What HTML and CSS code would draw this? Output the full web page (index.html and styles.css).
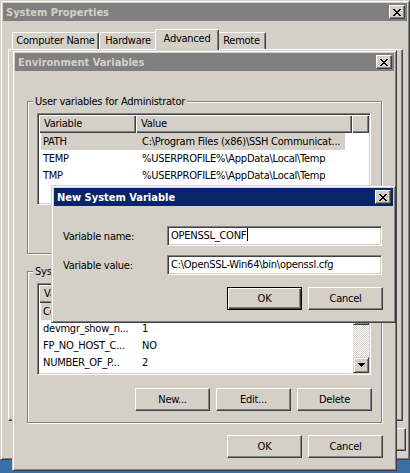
FILE: index.html
```html
<!DOCTYPE html>
<html lang="en">
<head>
    <meta charset="UTF-8">
    <meta name="viewport" content="width=device-width, initial-scale=1.0">
    <title>System Properties</title>
    <link rel="stylesheet" href="styles.css">
</head>
<body>
<div class="desktop">

    <!-- System Properties (back window) -->
    <div class="window sysprops">
        <div class="titlebar">
            <span class="title">System Properties</span>
            <span class="close"><svg width="8" height="7" viewBox="0 0 8 7"><path d="M0 0h2v1h-2zM6 0h2v1h-2zM1 1h2v1h-2zM5 1h2v1h-2zM2 2h4v1h-4zM3 3h2v1h-2zM2 4h4v1h-4zM1 5h2v1h-2zM5 5h2v1h-2zM0 6h2v1h-2zM6 6h2v1h-2z"/></svg></span>
        </div>
        <div class="tabs">
            <div class="tab tab-computer">Computer Name</div>
            <div class="tab tab-hardware">Hardware</div>
            <div class="tab tab-advanced active">Advanced</div>
            <div class="tab tab-remote">Remote</div>
        </div>
        <div class="tabpanel"></div>
        <div class="button-row sp-buttons">
            <button class="btn">OK</button>
            <button class="btn">Cancel</button>
            <button class="btn">Apply</button>
        </div>
    </div>

    <!-- Environment Variables -->
    <div class="window envvars">
        <div class="titlebar">
            <span class="title">Environment Variables</span>
            <span class="close"><svg width="8" height="7" viewBox="0 0 8 7"><path d="M0 0h2v1h-2zM6 0h2v1h-2zM1 1h2v1h-2zM5 1h2v1h-2zM2 2h4v1h-4zM3 3h2v1h-2zM2 4h4v1h-4zM1 5h2v1h-2zM5 5h2v1h-2zM0 6h2v1h-2zM6 6h2v1h-2z"/></svg></span>
        </div>
        <div class="env-body">
            <div class="group user-group">
                <div class="group-label">User variables for Administrator</div>
                <div class="listview">
                    <div class="lv-main">
                        <div class="lv-header">
                            <div class="hcell col-name">Variable</div>
                            <div class="hcell col-value">Value</div>
                            <div class="hcell col-fill"></div>
                        </div>
                        <div class="row selected"><span class="c1">PATH</span><span class="c2">C:\Program Files (x86)\SSH Communicat...</span></div>
                        <div class="row"><span class="c1">TEMP</span><span class="c2">%USERPROFILE%\AppData\Local\Temp</span></div>
                        <div class="row"><span class="c1">TMP</span><span class="c2">%USERPROFILE%\AppData\Local\Temp</span></div>
                    </div>
                </div>
                <div class="button-row group-buttons">
                    <button class="btn">New...</button>
                    <button class="btn">Edit...</button>
                    <button class="btn">Delete</button>
                </div>
            </div>

            <div class="group sys-group">
                <div class="group-label">System variables</div>
                <div class="listview">
                    <div class="lv-main">
                        <div class="lv-header">
                            <div class="hcell col-name">Variable</div>
                            <div class="hcell col-value">Value</div>
                            <div class="hcell col-fill"></div>
                        </div>
                        <div class="row selected"><span class="c1">ComSpec</span><span class="c2">C:\Windows\system32\cmd.exe</span></div>
                        <div class="row"><span class="c1">devmgr_show_n...</span><span class="c2">1</span></div>
                        <div class="row"><span class="c1">FP_NO_HOST_C...</span><span class="c2">NO</span></div>
                        <div class="row"><span class="c1">NUMBER_OF_P...</span><span class="c2">2</span></div>
                        <div class="row"><span class="c1">OS</span><span class="c2">Windows_NT</span></div>
                    </div>
                    <div class="vscroll">
                        <span class="sb-btn"><svg width="7" height="4" viewBox="0 0 7 4"><path d="M3 0h1v1h1v1h1v1h1v1h-7v-1h1v-1h1v-1h1z"/></svg></span>
                        <span class="sb-thumb"></span>
                        <span class="sb-track"></span>
                        <span class="sb-btn"><svg width="7" height="4" viewBox="0 0 7 4"><path d="M0 0h7v1h-1v1h-1v1h-1v1h-1v-1h-1v-1h-1v-1h-1z"/></svg></span>
                    </div>
                </div>
                <div class="button-row group-buttons">
                    <button class="btn">New...</button>
                    <button class="btn">Edit...</button>
                    <button class="btn">Delete</button>
                </div>
            </div>

            <div class="button-row env-buttons">
                <button class="btn">OK</button>
                <button class="btn">Cancel</button>
            </div>
        </div>
    </div>

    <!-- New System Variable (front dialog) -->
    <div class="window newvar">
        <div class="titlebar active">
            <span class="title">New System Variable</span>
            <span class="close"><svg width="8" height="7" viewBox="0 0 8 7"><path d="M0 0h2v1h-2zM6 0h2v1h-2zM1 1h2v1h-2zM5 1h2v1h-2zM2 2h4v1h-4zM3 3h2v1h-2zM2 4h4v1h-4zM1 5h2v1h-2zM5 5h2v1h-2zM0 6h2v1h-2zM6 6h2v1h-2z"/></svg></span>
        </div>
        <div class="newvar-body">
            <div class="form">
                <label class="field-label">Variable name:</label>
                <div class="field">OPENSSL_CONF<span class="caret"></span></div>
                <label class="field-label">Variable value:</label>
                <div class="field">C:\OpenSSL-Win64\bin\openssl.cfg</div>
            </div>
            <div class="button-row dialog-buttons">
                <button class="btn default">OK</button>
                <button class="btn">Cancel</button>
            </div>
        </div>
    </div>

</div>
</body>
</html>
```

FILE: styles.css
```css
/* Windows classic dialogs */
* {
    box-sizing: border-box;
}

body {
    margin: 0;
    width: 410px;
    height: 473px;
    overflow: hidden;
    background-color: #3a6ea5;
    font-family: "DejaVu Sans Condensed", "DejaVu Sans", sans-serif;
    font-size: 11px;
    letter-spacing: -0.25px;
    color: #000;
}

.desktop {
    position: relative;
    width: 410px;
    height: 473px;
}

/* window frame */
.window {
    position: absolute;
    display: flex;
    flex-direction: column;
    padding: 2px;
    background-color: #d4d0c8;
    border: 1px solid;
    border-color: #d4d0c8 #404040 #404040 #d4d0c8;
    box-shadow: inset 1px 1px #fff, inset -1px -1px #808080;
}

.sysprops {
    left: 0;
    top: 0;
    width: 410px;
    height: 460px;
}

.envvars {
    left: 12px;
    top: 50px;
    width: 385px;
    height: 421px;
}

.newvar {
    left: 51px;
    top: 185px;
    width: 345px;
    height: 138px;
}

.titlebar {
    display: flex;
    align-items: center;
    flex: none;
    height: 18px;
    padding: 0 2px 0 3px;
    background-color: #808080;
    color: #d4d0c8;
    font-weight: bold;
    letter-spacing: 0;
}

.titlebar.active {
    background-color: #0a246a;
    color: #fff;
}

.titlebar .title {
    flex: 1;
    white-space: nowrap;
}

.close {
    display: flex;
    align-items: center;
    justify-content: center;
    width: 16px;
    height: 14px;
    background-color: #d4d0c8;
    border: 1px solid;
    border-color: #fff #404040 #404040 #fff;
    box-shadow: inset -1px -1px #808080;
}

/* buttons */
.button-row {
    display: flex;
    justify-content: flex-end;
    gap: 6px;
    flex: none;
}

.btn {
    width: 75px;
    height: 23px;
    padding: 0;
    background-color: #d4d0c8;
    border: 1px solid;
    border-color: #fff #404040 #404040 #fff;
    box-shadow: inset -1px -1px #808080;
    font: inherit;
    letter-spacing: inherit;
    color: #000;
}

.btn.default {
    border-color: #000;
    box-shadow: inset 1px 1px #fff, inset -1px -1px #404040, inset -2px -2px #808080;
}

/* tabs */
.tabs {
    display: flex;
    align-items: flex-end;
    height: 20px;
    margin-top: 8px;
    padding-left: 9px;
}

.tab {
    height: 17px;
    line-height: 15px;
    text-align: center;
    white-space: nowrap;
    background-color: #d4d0c8;
    border: 1px solid;
    border-color: #fff #404040 transparent #fff;
    border-bottom: none;
    border-radius: 2px 2px 0 0;
    box-shadow: inset -1px 0 #808080;
}

.tab-computer { width: 87px; }
.tab-hardware { width: 58px; }
.tab-advanced { width: 60px; }
.tab-remote { width: 49px; }

.tab.active {
    position: relative;
    z-index: 1;
    width: 64px;
    height: 21px;
    margin: 0 -2px -1px;
    line-height: 17px;
}

.tabpanel {
    height: 372px;
    margin: 0 4px 0 5px;
    border: 1px solid;
    border-color: #fff #404040 #404040 #fff;
    box-shadow: inset -1px -1px #808080;
}

.sp-buttons {
    margin-top: 7px;
    padding-right: 1px;
}

/* environment variables */
.env-body {
    flex: 1;
    padding: 30px 12px 0;
}

.group {
    border: 1px solid #808080;
    box-shadow: inset 1px 1px #fff, 1px 1px #fff;
    padding: 0 9px 11px;
}

.user-group {
    padding-bottom: 12px;
}

.sys-group {
    margin-top: 17px;
}

.group-label {
    width: fit-content;
    margin: -7px 0 0 -4px;
    padding: 0 2px;
    line-height: 13px;
    background-color: #d4d0c8;
    white-space: nowrap;
}

.listview {
    display: flex;
    width: 334px;
    height: 92px;
    margin-top: 5px;
    padding: 1px;
    background-color: #fff;
    border: 1px solid;
    border-color: #808080 #fff #fff #808080;
    box-shadow: inset 1px 1px #404040, inset -1px -1px #d4d0c8;
}

.lv-main {
    flex: 1;
    overflow: hidden;
    white-space: nowrap;
}

.lv-header {
    display: flex;
    height: 18px;
    background-color: #d4d0c8;
}

.hcell {
    height: 18px;
    line-height: 17px;
    padding-left: 5px;
    box-shadow: inset 1px 1px #fff, inset -1px -1px #404040, inset -2px -2px #808080;
}

.col-name { width: 97px; }
.col-value { width: 216px; }
.col-fill { flex: 1; }

.row {
    display: flex;
    width: 304px;
    height: 17px;
    margin-left: 2px;
    line-height: 17px;
}

.row.selected {
    background-color: #d4d0c8;
}

.c1 {
    width: 95px;
    padding-left: 2px;
    overflow: hidden;
}

.c2 {
    flex: 1;
    padding-left: 6px;
    overflow: hidden;
}

.vscroll {
    display: flex;
    flex-direction: column;
    width: 16px;
    background-image: repeating-conic-gradient(#fff 0 25%, #d4d0c8 0 50%);
    background-size: 2px 2px;
}

.sb-btn,
.sb-thumb {
    display: flex;
    align-items: center;
    justify-content: center;
    height: 16px;
    background-color: #d4d0c8;
    border: 1px solid;
    border-color: #d4d0c8 #404040 #404040 #d4d0c8;
    box-shadow: inset 1px 1px #fff, inset -1px -1px #808080;
}

.sb-thumb {
    height: 24px;
}

.sb-track {
    flex: 1;
}

.group-buttons {
    margin-top: 13px;
}

.env-buttons {
    margin-top: 12px;
    margin-right: -1px;
}

/* new system variable dialog */
.newvar-body {
    flex: 1;
    padding: 20px 10px 0 9px;
}

.form {
    display: grid;
    grid-template-columns: 104px 215px;
    grid-auto-rows: 20px;
    row-gap: 9px;
    align-items: center;
}

.field {
    height: 20px;
    line-height: 16px;
    padding: 1px 3px;
    background-color: #fff;
    white-space: nowrap;
    border: 1px solid;
    border-color: #808080 #fff #fff #808080;
    box-shadow: inset 1px 1px #404040, inset -1px -1px #d4d0c8;
}

.caret {
    display: inline-block;
    width: 1px;
    height: 13px;
    margin-left: 1px;
    vertical-align: -2px;
    background-color: #000;
}

.dialog-buttons {
    margin-top: 12px;
}
```
